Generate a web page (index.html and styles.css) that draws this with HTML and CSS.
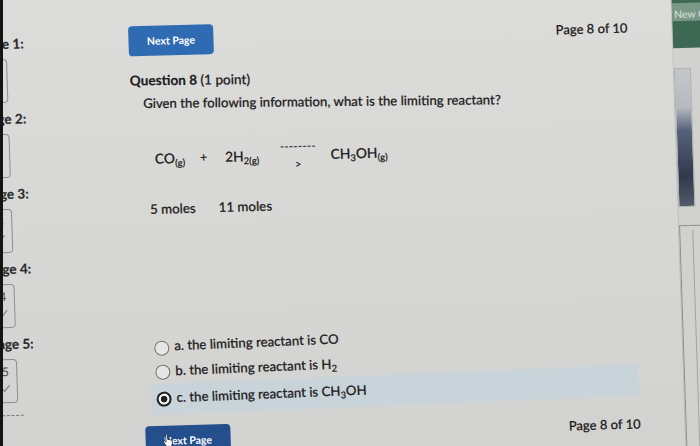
FILE: index.html
```html
<!DOCTYPE html>
<html lang="en">
<head>
<meta charset="utf-8">
<title>Quiz - Page 8 of 10</title>
<link rel="stylesheet" href="styles.css">
</head>
<body>
<div class="screen">
  <div class="tilt">
    <aside class="nav">
      <div class="nav-item">
        <div class="nav-label">Page 1:</div>
        <div class="nav-box"><span class="nav-num">1</span><svg class="nav-check" viewBox="0 0 10 8"><polyline points="1,4.5 3.8,7 9,1"/></svg></div>
      </div>
      <div class="nav-item">
        <div class="nav-label">Page 2:</div>
        <div class="nav-box"><span class="nav-num">2</span><svg class="nav-check" viewBox="0 0 10 8"><polyline points="1,4.5 3.8,7 9,1"/></svg></div>
      </div>
      <div class="nav-item">
        <div class="nav-label">Page 3:</div>
        <div class="nav-box"><span class="nav-num">3</span><svg class="nav-check" viewBox="0 0 10 8"><polyline points="1,4.5 3.8,7 9,1"/></svg></div>
      </div>
      <div class="nav-item">
        <div class="nav-label">Page 4:</div>
        <div class="nav-box"><span class="nav-num">4</span><svg class="nav-check" viewBox="0 0 10 8"><polyline points="1,4.5 3.8,7 9,1"/></svg></div>
      </div>
      <div class="nav-item">
        <div class="nav-label">Page 5:</div>
        <div class="nav-box"><span class="nav-num">5</span><svg class="nav-check" viewBox="0 0 10 8"><polyline points="1,4.5 3.8,7 9,1"/></svg></div>
      </div>
      <div class="nav-more"></div>
    </aside>

    <main class="page">
      <header class="bar">
        <button class="btn">Next Page</button>
        <span class="pager">Page 8 of 10</span>
      </header>

      <h2 class="q-title">Question 8 <span class="pts">(1 point)</span></h2>
      <p class="q-text">Given the following information, what is the limiting reactant?</p>

      <div class="eq">
        <span class="sp">CO<sub>(g)</sub></span>
        <span class="plus">+</span>
        <span class="sp">2H<sub>2(g)</sub></span>
        <span class="arrow"><span class="dash">--------</span><span class="gt">&gt;</span></span>
        <span class="sp">CH<sub>3</sub>OH<sub>(g)</sub></span>
      </div>

      <div class="moles"><span>5 moles</span><span>11 moles</span></div>

      <ul class="opts">
        <li class="opt"><span class="radio"></span><span class="opt-text">a. the limiting reactant is CO</span></li>
        <li class="opt mid"><span class="radio"></span><span class="opt-text">b. the limiting reactant is H<sub>2</sub></span></li>
        <li class="opt sel"><span class="radio"></span><span class="opt-text">c. the limiting reactant is CH<sub>3</sub>OH</span></li>
      </ul>

      <footer class="bar bottom">
        <button class="btn dark">Next Page<svg class="hand" viewBox="0 0 12 15"><path d="M3.5 1.2c0-.6.5-1 1-1s1 .4 1 1V6h.3c.5 0 .9.3 1 .7.2-.3.5-.5.9-.5.5 0 .9.3 1 .8.2-.2.4-.3.7-.3.6 0 1 .4 1 1v3c0 2-1.3 3.5-3.3 3.5H6c-1.2 0-2-.5-2.7-1.5L1 8.9c-.3-.5-.2-1 .2-1.3.4-.3 1-.2 1.3.2l1 1.2V1.2z"/></svg></button>
        <span class="pager">Page 8 of 10</span>
      </footer>
    </main>

    <aside class="side-win">
      <div class="sw-head"><div class="sw-tab">New Chat</div></div>
      <div class="sw-img"></div>
      <div class="sw-card"><div class="sw-inner"></div></div>
    </aside>
  </div>
</div>
</body>
</html>
```

FILE: styles.css
```css
* {
  box-sizing: border-box;
  margin: 0;
  padding: 0;
}

html, body {
  width: 700px;
  height: 446px;
  overflow: hidden;
  background: #d6d7d4;
}

body {
  font-family: Lato, "Noto Sans", sans-serif;
  color: #1f2020;
  -webkit-text-stroke: 0.2px currentColor;
}

.screen {
  position: relative;
  width: 700px;
  height: 446px;
  overflow: hidden;
  background: #d6d7d4;
}

/* dark bezel edge of the photographed screen */
.screen::before {
  content: "";
  position: absolute;
  left: 0;
  top: 0;
  bottom: 0;
  width: 3px;
  background: #141414;
  z-index: 5;
}

/* the photographed screen is slightly sheared / tilted */
.tilt {
  display: flex;
  width: 781px;
  height: 540px;
  margin-left: -40px;
  transform: matrix(1, -0.028, 0.033, 1, 0, 0);
  transform-origin: 40px 0;
  background: linear-gradient(#dcdddb, #d4d5d2 70%, #d0d1ce);
}

/* ---------- left page navigator ---------- */
.nav {
  flex: none;
  width: 62px;
  padding-top: 35.5px;
  padding-left: 18.5px;
  overflow: hidden;
}

.nav-item {
  display: flex;
  flex-direction: column;
  align-items: flex-start;
}

.nav-label {
  font-size: 13.5px;
  font-weight: 700;
  line-height: 16px;
  white-space: nowrap;
  margin-bottom: 7.5px;
  color: #2b2b2b;
}

.nav-box {
  width: 24px;
  height: 44px;
  margin-left: 2.5px;
  margin-bottom: 7.5px;
  border: 1px solid #8e8f8d;
  border-radius: 4px;
  display: flex;
  flex-direction: column;
  align-items: center;
  padding-top: 4px;
}

.nav-num {
  font-size: 12px;
  line-height: 16px;
  color: #4a4b4b;
  -webkit-text-stroke: 0;
}

.nav-check {
  width: 10px;
  height: 8px;
  margin-top: 3.5px;
  fill: none;
  stroke: #8a8b89;
  stroke-width: 1.3;
}

.nav-more {
  width: 26px;
  height: 5px;
  margin-top: 4.5px;
  margin-left: 5px;
  border-top: 1.5px dashed #777;
  border-left: 1.5px solid #333;
}

/* ---------- main quiz page ---------- */
.page {
  flex: none;
  width: 649px;
  padding: 29.8px 44px 0 105px;
  border-right: 1px solid rgba(0, 0, 0, 0.13);
}

.bar {
  display: flex;
  justify-content: space-between;
  align-items: flex-start;
}

.btn {
  width: 85px;
  height: 30px;
  border: 0;
  border-radius: 4px;
  background: #2f6bb2;
  color: #fff;
  font-family: Lato, "Noto Sans", sans-serif;
  font-size: 10.5px;
  font-weight: 700;
  line-height: 30px;
  text-align: center;
  -webkit-text-stroke: 0;
}

.pager {
  font-size: 13px;
  font-weight: 500;
  line-height: 16px;
  margin-top: 7.7px;
}

.q-title {
  margin-top: 16.5px;
  font-size: 13.6px;
  font-weight: 700;
  line-height: 18px;
  transform: rotate(1deg);
  transform-origin: 50% 50%;
  width: max-content;
}

.pts {
  font-weight: 500;
}

.q-text {
  margin-top: 6.7px;
  padding-left: 12.5px;
  font-size: 13.2px;
  font-weight: 500;
  line-height: 18px;
  width: max-content;
  transform: rotate(1deg);
  transform-origin: 50% 50%;
}

.eq {
  display: flex;
  align-items: center;
  height: 30px;
  margin-top: 28.6px;
  padding-left: 22.5px;
  font-size: 13.8px;
  font-weight: 500;
  line-height: 18px;
}

sub {
  font-size: 9.5px;
  line-height: 0;
  vertical-align: -3px;
}

.plus {
  font-size: 12px;
  margin-left: 15px;
  margin-right: 18px;
}

.arrow {
  align-self: stretch;
  display: flex;
  flex-direction: column;
  align-items: center;
  gap: 6px;
  margin: 0 14.5px 0 21px;
  font-size: 11px;
  font-weight: 400;
  line-height: 12px;
}

.dash {
  letter-spacing: 0.4px;
}

.moles {
  display: flex;
  gap: 23px;
  margin-top: 26.3px;
  padding-left: 16px;
  font-size: 13.3px;
  font-weight: 500;
  line-height: 18px;
}

.opts {
  list-style: none;
  margin: 116.7px 0 0 11px;
  width: 487px;
  transform: rotate(-0.7deg);
  transform-origin: 0 50%;
}

.opt {
  display: flex;
  align-items: center;
  height: 26px;
  padding-left: 5px;
  font-size: 13.2px;
  font-weight: 500;
}

.opt.mid {
  height: 23.4px;
}

.opt.sel {
  height: 31px;
  background: #c8d4da;
}

.opt-text {
  margin-bottom: 4px;
}

.radio {
  flex: none;
  width: 15px;
  height: 15px;
  margin-right: 5px;
  border-radius: 50%;
  border: 1.5px solid #6f706f;
  background: #e6e7e5;
}

.sel .radio {
  border: 2.5px solid #1f2020;
  background: radial-gradient(circle, #1f2020 0 3px, #f1f1f0 3.6px);
}

.bottom {
  margin-top: 11.2px;
}

.btn.dark {
  position: relative;
  margin-left: 3.8px;
  background: #244e8c;
}

.bottom .pager {
  margin-top: 2.7px;
}

/* mouse pointer over the bottom button */
.hand {
  position: absolute;
  left: 17px;
  top: 8px;
  width: 11px;
  height: 14px;
  fill: #fafafa;
  stroke: #111;
  stroke-width: 0.8;
}

/* ---------- neighbouring window on the right ---------- */
.side-win {
  flex: none;
  width: 70px;
  display: flex;
  flex-direction: column;
  background: #d1d2cf;
}

.sw-head {
  height: 67px;
  padding-top: 22px;
  background: #3d6954;
}

.sw-tab {
  height: 18px;
  padding-left: 2px;
  background: #7b9887;
  color: #d9e1dc;
  font-size: 10.5px;
  line-height: 22px;
  white-space: nowrap;
  overflow: hidden;
  -webkit-text-stroke: 0;
}

.sw-img {
  width: 17px;
  height: 139px;
  margin-top: 20px;
  border: 1px solid #b0b1af;
  background: linear-gradient(#c4c7ca 0, #b6bac0 28%, #56627a 45%, #2f3a4d 78%, #505a68 100%);
}

.sw-card {
  flex: 1;
  width: 22px;
  margin-top: 18px;
  border: 1px solid #8f908e;
  border-bottom: 0;
  padding: 4px 0 0 12px;
}

.sw-inner {
  height: 100%;
  border-left: 1px solid #a2a3a1;
}
```
